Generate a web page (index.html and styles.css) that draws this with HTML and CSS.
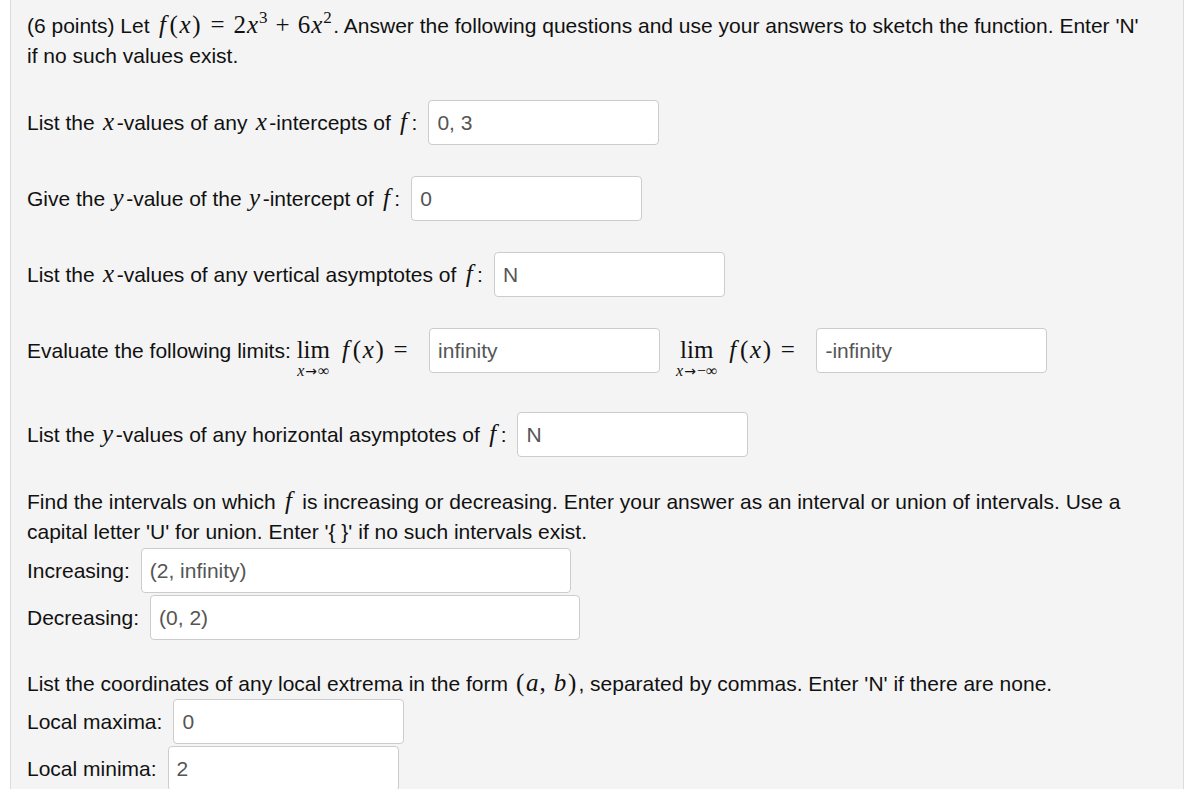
FILE: index.html
```html
<!DOCTYPE html>
<html>
<head>
<meta charset="utf-8">
<link rel="stylesheet" href="styles.css">
</head>
<body>
<div class="panel">
  <p class="intro">(6 points) Let <span class="m"><i class="vf">f</i><span class="pr">(</span><i class="vx">x</i><span class="pr">)</span><span class="op eq">=</span>2<i class="vx">x</i><sup>3</sup><span class="op pl">+</span>6<i class="vx">x</i><sup>2</sup></span>. Answer the following questions and use your answers to sketch the function. Enter 'N' if no such values exist.</p>

  <div class="row r1">
    <span class="lbl">List the <span class="m"><i class="vx">x</i></span>-values of any <span class="m"><i class="vx">x</i></span>-intercepts of <span class="m"><i class="vf">f</i></span>:</span>
    <input class="ans" type="text" value="0, 3">
  </div>

  <div class="row">
    <span class="lbl">Give the <span class="m"><i class="vy">y</i></span>-value of the <span class="m"><i class="vy">y</i></span>-intercept of <span class="m"><i class="vf">f</i></span>:</span>
    <input class="ans" type="text" value="0">
  </div>

  <div class="row">
    <span class="lbl">List the <span class="m"><i class="vx">x</i></span>-values of any vertical asymptotes of <span class="m"><i class="vf">f</i></span>:</span>
    <input class="ans" type="text" value="N">
  </div>

  <div class="row lim-row">
    <span class="lbl">Evaluate the following limits: <span class="lim"><span class="lim-top">lim</span><span class="lim-sub"><i>x</i><span class="arr">→</span>∞</span></span><span class="m after-lim"><i class="vf">f</i><span class="pr">(</span><i class="vx">x</i><span class="pr">)</span><span class="op eq">=</span></span></span>
    <input class="ans" type="text" value="infinity">
    <span class="lbl second"><span class="lim"><span class="lim-top">lim</span><span class="lim-sub"><i>x</i><span class="arr">→</span>−∞</span></span><span class="m after-lim"><i class="vf">f</i><span class="pr">(</span><i class="vx">x</i><span class="pr">)</span><span class="op eq">=</span></span></span>
    <input class="ans" type="text" value="-infinity">
  </div>

  <div class="row">
    <span class="lbl">List the <span class="m"><i class="vy">y</i></span>-values of any horizontal asymptotes of <span class="m"><i class="vf">f</i></span>:</span>
    <input class="ans" type="text" value="N">
  </div>

  <p class="para">Find the intervals on which <span class="m"><i class="vf">f</i></span> is increasing or decreasing. Enter your answer as an interval or union of intervals. Use a capital letter 'U' for union. Enter '{ }' if no such intervals exist.</p>
  <div class="row tight">
    <span class="lbl">Increasing:</span>
    <input class="ans wide" type="text" value="(2, infinity)">
  </div>
  <div class="row tight gap2">
    <span class="lbl">Decreasing:</span>
    <input class="ans wide" type="text" value="(0, 2)">
  </div>

  <p class="para p2">List the coordinates of any local extrema in the form <span class="m"><span class="pr">(</span><i class="va">a</i>,<span class="thin"></span><i class="vb">b</i><span class="pr">)</span></span>, separated by commas. Enter 'N' if there are none.</p>
  <div class="row flush">
    <span class="lbl">Local maxima:</span>
    <input class="ans" type="text" value="0">
  </div>
  <div class="row tight gap2">
    <span class="lbl">Local minima:</span>
    <input class="ans" type="text" value="2">
  </div>
</div>
</body>
</html>
```

FILE: styles.css
```css
html, body {
  margin: 0;
  padding: 0;
  background: #ffffff;
}
body {
  font-family: "Liberation Sans", Arial, sans-serif;
  font-size: 21px;
  color: #111;
}
.panel {
  margin-left: 10px;
  width: 1122px;
  height: 778px;
  padding: 11px 34px 0 16px;
  background: #f4f4f4;
  border-left: 1px solid #dcdcdc;
  border-right: 1px solid #dcdcdc;
}
p {
  margin: 0;
  line-height: 30px;
}
.m {
  font-family: "Liberation Serif", "Times New Roman", serif;
  font-size: 25px;
  line-height: 0;
  margin: 0 1.5px;
}
.m i {
  font-style: italic;
}
.vf {
  padding: 0 3px 0 2px;
}
.vx {
  padding: 0 1px;
}
.vy {
  padding: 0 1px 0 0;
}
.va {
  padding: 0 1px;
}
.vb {
  padding: 0 1px;
}
.pr {
  padding: 0 0.7px;
}
.eq {
  padding: 0 9px;
}
.pl {
  padding: 0 8px;
}
.thin {
  display: inline-block;
  width: 7px;
}
sup {
  font-size: 17px;
  line-height: 0;
  vertical-align: 0;
  position: relative;
  top: -10px;
}
.row {
  display: flex;
  align-items: center;
  gap: 11px;
  height: 45px;
  margin-top: 31px;
}
.r1 {
  margin-top: 29px;
}
.lbl {
  white-space: nowrap;
}
.ans {
  box-sizing: border-box;
  width: 231px;
  height: 45px;
  border: 1.5px solid #cccccc;
  border-radius: 4px;
  background: #fff;
  padding: 0 8px;
  font-family: "Liberation Sans", Arial, sans-serif;
  font-size: 21px;
  color: #555;
  outline: none;
}
.wide {
  width: 430px;
}
.lim {
  display: inline-flex;
  flex-direction: column;
  align-items: center;
  vertical-align: baseline;
  font-family: "Liberation Serif", "Times New Roman", serif;
  line-height: normal;
}
.lim-top {
  font-size: 25px;
  line-height: 24px;
}
.lim-sub {
  font-size: 16px;
  line-height: 15px;
  margin-top: 1px;
  margin-bottom: -16px;
  white-space: nowrap;
}
.arr {
  font-family: "DejaVu Sans", sans-serif;
  font-size: 14px;
  padding: 0 1px;
}
.second {
  margin-left: 5px;
}
.after-lim {
  margin-left: 10px;
}
.lim-row + .row {
  margin-top: 39px;
}
.para {
  margin-top: 30px;
}
.tight {
  margin-top: 1px;
}
.gap2 {
  margin-top: 2px;
}
.p2 {
  margin-top: 29px;
}
.flush {
  margin-top: 0;
}
```
